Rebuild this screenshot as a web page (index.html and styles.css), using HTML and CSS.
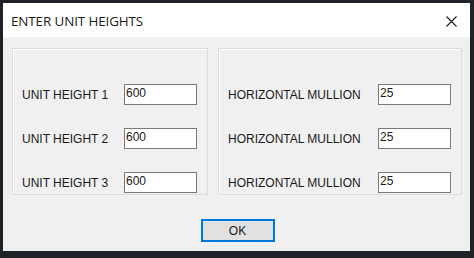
FILE: index.html
```html
<!DOCTYPE html>
<html>
<head>
<meta charset="utf-8">
<link rel="stylesheet" href="styles.css">
</head>
<body>
<div class="frame">
  <div class="window">
    <div class="titlebar">
      <span class="title">ENTER UNIT HEIGHTS</span>
      <svg class="close" width="11" height="11" viewBox="0 0 11 11"><path d="M0.5 0.5 L10.5 10.5 M10.5 0.5 L0.5 10.5" stroke="#1a1a1a" stroke-width="1.1" fill="none"/></svg>
    </div>
    <div class="content">
      <div class="groups">
        <div class="group group-left">
          <div class="row"><span class="label">UNIT HEIGHT 1</span><div class="input">600</div></div>
          <div class="row"><span class="label">UNIT HEIGHT 2</span><div class="input">600</div></div>
          <div class="row"><span class="label">UNIT HEIGHT 3</span><div class="input">600</div></div>
        </div>
        <div class="group group-right">
          <div class="row"><span class="label">HORIZONTAL MULLION</span><div class="input">25</div></div>
          <div class="row"><span class="label">HORIZONTAL MULLION</span><div class="input">25</div></div>
          <div class="row"><span class="label">HORIZONTAL MULLION</span><div class="input">25</div></div>
        </div>
      </div>
      <div class="actions">
        <div class="button">OK</div>
      </div>
    </div>
  </div>
</div>
</body>
</html>
```
FILE: styles.css
```css
html, body {
  margin: 0;
  padding: 0;
  background: #1f2328;
}
.frame {
  width: 474px;
  height: 258px;
  box-sizing: border-box;
  padding: 3px 4px 7px 3px;
  background: #1f2328;
}
.window {
  width: 467px;
  height: 248px;
  display: flex;
  flex-direction: column;
  background: #f0f0f0;
}
.titlebar {
  height: 34px;
  flex: none;
  background: #ffffff;
  display: flex;
  align-items: center;
  justify-content: space-between;
  padding: 0 13px 0 8px;
}
.title {
  font-family: "Open Sans", "Noto Sans", sans-serif;
  font-size: 13.4px;
  color: #1a1a1a;
  letter-spacing: -0.1px;
  margin-top: 1px;
}
.close {
  display: block;
  margin-top: 2px;
}
.content {
  flex: 1;
  display: flex;
  flex-direction: column;
  padding: 11px 8px 0 9px;
}
.groups {
  display: flex;
  gap: 10px;
}
.group {
  height: 147px;
  box-sizing: border-box;
  border: 1px solid #dcdcdc;
  box-shadow: inset 1px 1px 0 #ffffff;
  display: flex;
  flex-direction: column;
  gap: 23px;
  padding: 35px 10px 0 9px;
}
.group-left { width: 196px; }
.group-right { width: 244px; }
.row {
  display: flex;
  align-items: center;
  justify-content: space-between;
  height: 21px;
}
.label {
  font-family: "Liberation Sans", Arial, sans-serif;
  font-size: 12px;
  color: #1a1a1a;
}
.input {
  width: 73px;
  height: 21px;
  box-sizing: border-box;
  border: 1px solid #7a7a7a;
  background: #ffffff;
  font-family: "Liberation Sans", Arial, sans-serif;
  font-size: 12px;
  color: #1a1a1a;
  padding: 1px 0 0 1px;
  line-height: 14px;
}
.actions {
  display: flex;
  justify-content: center;
  padding-top: 24px;
}
.button {
  width: 74px;
  height: 23px;
  box-sizing: border-box;
  border: 2px solid #0078d7;
  background: #e1e1e1;
  font-family: "Liberation Sans", Arial, sans-serif;
  font-size: 12px;
  color: #1a1a1a;
  display: flex;
  align-items: center;
  justify-content: center;
  margin-left: 1px;
}
```
